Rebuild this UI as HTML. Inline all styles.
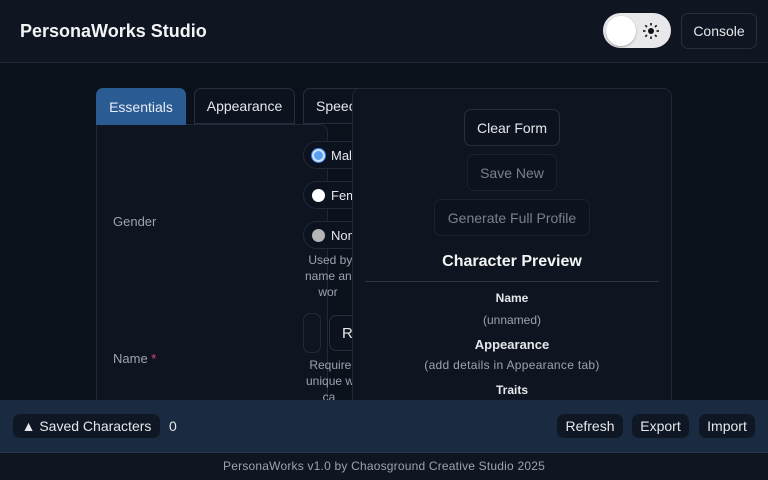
<!DOCTYPE html>
<html><head><meta charset="utf-8"><style>
*{box-sizing:border-box;margin:0;padding:0}
body{width:768px;height:480px;overflow:hidden;background:#0b111b;font-family:"Liberation Sans",sans-serif;color:#e5e7eb;position:relative}
.a{position:absolute}
.btn{position:absolute;border:1px solid #243042;border-radius:7px;background:#0d131e;color:#e5e7eb;font-size:14px;display:flex;align-items:center;justify-content:center}
.pill{position:absolute;border:1px solid #1f2a3a;border-radius:14px;background:#0d131e;height:28px;display:flex;align-items:center;padding-left:8px;font-size:13px;color:#e5e7eb;overflow:hidden}
.dot{width:13px;height:13px;border-radius:50%;margin-right:6px}
.small{position:absolute;font-size:12px;color:#9ca3af;line-height:16px;overflow:hidden;white-space:nowrap}
</style></head><body>
<div class="a" style="left:0;top:0;width:768px;height:63px;background:#0f1521;border-bottom:1px solid #1f2937"></div>
<div class="a" style="left:20px;top:21px;font-size:18px;font-weight:bold;color:#f3f4f6">PersonaWorks Studio</div>
<div class="a" style="left:603px;top:13px;width:68px;height:35px;border-radius:18px;background:#e8e8ea"></div>
<div class="a" style="left:606px;top:16px;width:30px;height:30px;border-radius:50%;background:#fff;box-shadow:0 1px 2px rgba(0,0,0,.3)"></div>
<svg class="a" style="left:642px;top:22px" width="18" height="18" viewBox="0 0 18 18"><circle cx="9" cy="9" r="3" fill="#111"/><g stroke="#111" stroke-width="1.6"><line x1="9" y1="1" x2="9" y2="3.5"/><line x1="9" y1="14.5" x2="9" y2="17"/><line x1="1" y1="9" x2="3.5" y2="9"/><line x1="14.5" y1="9" x2="17" y2="9"/><line x1="3.3" y1="3.3" x2="5" y2="5"/><line x1="13" y1="13" x2="14.7" y2="14.7"/><line x1="3.3" y1="14.7" x2="5" y2="13"/><line x1="13" y1="5" x2="14.7" y2="3.3"/></g></svg>
<div class="btn" style="left:681px;top:13px;width:76px;height:36px;background:#0f1521">Console</div>

<div class="a" style="left:96px;top:124px;width:232px;height:290px;background:#0f1520;border:1px solid #1f2937;border-radius:0 8px 0 0"></div>
<div class="a" style="left:96px;top:88px;width:90px;height:37px;background:#2a5b92;border-radius:7px 7px 0 0;font-size:14px;display:flex;align-items:center;justify-content:center;color:#e8eef7">Essentials</div>
<div class="btn" style="left:194px;top:88px;width:101px;height:36px;border-radius:7px 7px 0 0">Appearance</div>
<div class="btn" style="left:303px;top:88px;width:80px;height:36px;border-radius:7px 7px 0 0;justify-content:flex-start;padding-left:12px">Speech</div>
<div class="a" style="left:113px;top:214px;font-size:13px;color:#9ca3af">Gender</div>
<div class="a" style="left:113px;top:351px;font-size:13px;color:#9ca3af">Name <span style="color:#e0457b">*</span></div>
<div class="pill" style="left:303px;top:141px;width:80px"><span class="dot" style="background:#5aa0f0;border:2px solid #cfe0f5;box-shadow:0 0 0 1px #3b82f6"></span>Male</div>
<div class="pill" style="left:303px;top:181px;width:80px"><span class="dot" style="background:#fff"></span>Female</div>
<div class="pill" style="left:303px;top:221px;width:80px"><span class="dot" style="background:#b5b5b8"></span>Non</div>
<div class="small" style="left:305px;top:252px;width:48px">&nbsp;Used by<br>name an<br>&nbsp;&nbsp;&nbsp;&nbsp;wor</div>
<div class="a" style="left:303px;top:313px;width:18px;height:40px;border:1px solid #1f2a3a;border-radius:7px"></div>
<div class="btn" style="left:329px;top:315px;width:50px;height:36px;justify-content:flex-start;padding-left:12px;font-size:15px">R</div>
<div class="small" style="left:306px;top:357px;width:47px">&nbsp;Required<br>unique w<br>&nbsp;&nbsp;&nbsp;&nbsp;&nbsp;ca</div>

<div class="a" style="left:352px;top:88px;width:320px;height:330px;background:#0f1520;border:1px solid #1f2937;border-radius:8px"></div>
<div class="btn" style="left:464px;top:109px;width:96px;height:37px">Clear Form</div>
<div class="btn" style="left:467px;top:154px;width:90px;height:37px;color:#7b818b;border-color:#1a2230">Save New</div>
<div class="btn" style="left:434px;top:199px;width:156px;height:37px;color:#7b818b;border-color:#1a2230">Generate Full Profile</div>
<div class="a" style="left:352px;top:253px;width:320px;text-align:center;font-size:16px;font-weight:bold;color:#f3f4f6">Character Preview</div>
<div class="a" style="left:365px;top:281px;width:294px;height:1px;background:#2a3442"></div>
<div class="a" style="left:352px;top:291px;width:320px;text-align:center;font-size:12px;font-weight:bold">Name</div>
<div class="a" style="left:352px;top:313px;width:320px;text-align:center;font-size:12px;color:#9ca3af">(unnamed)</div>
<div class="a" style="left:352px;top:337px;width:320px;text-align:center;font-size:13px;font-weight:bold">Appearance</div>
<div class="a" style="left:352px;top:358px;width:320px;text-align:center;font-size:12px;color:#9ca3af;letter-spacing:0.3px">(add details in Appearance tab)</div>
<div class="a" style="left:352px;top:383px;width:320px;text-align:center;font-size:12px;font-weight:bold">Traits</div>

<div class="a" style="left:0;top:400px;width:768px;height:53px;background:#1a2a40;border-bottom:1px solid #25354c"></div>
<div class="btn" style="left:13px;top:414px;width:147px;height:24px;background:#0f1724;border:none;font-size:14px">▲ Saved Characters</div>
<div class="a" style="left:169px;top:418px;font-size:14px">0</div>
<div class="btn" style="left:557px;top:414px;width:66px;height:24px;background:#0f1724;border:none">Refresh</div>
<div class="btn" style="left:632px;top:414px;width:57px;height:24px;background:#0f1724;border:none">Export</div>
<div class="btn" style="left:699px;top:414px;width:56px;height:24px;background:#0f1724;border:none">Import</div>
<div class="a" style="left:0;top:453px;width:768px;height:27px;background:#0f1521"></div>
<div class="a" style="left:0;top:459px;width:768px;text-align:center;font-size:12px;color:#9ca3af;letter-spacing:0.2px">PersonaWorks v1.0 by Chaosground Creative Studio 2025</div>
</body></html>
